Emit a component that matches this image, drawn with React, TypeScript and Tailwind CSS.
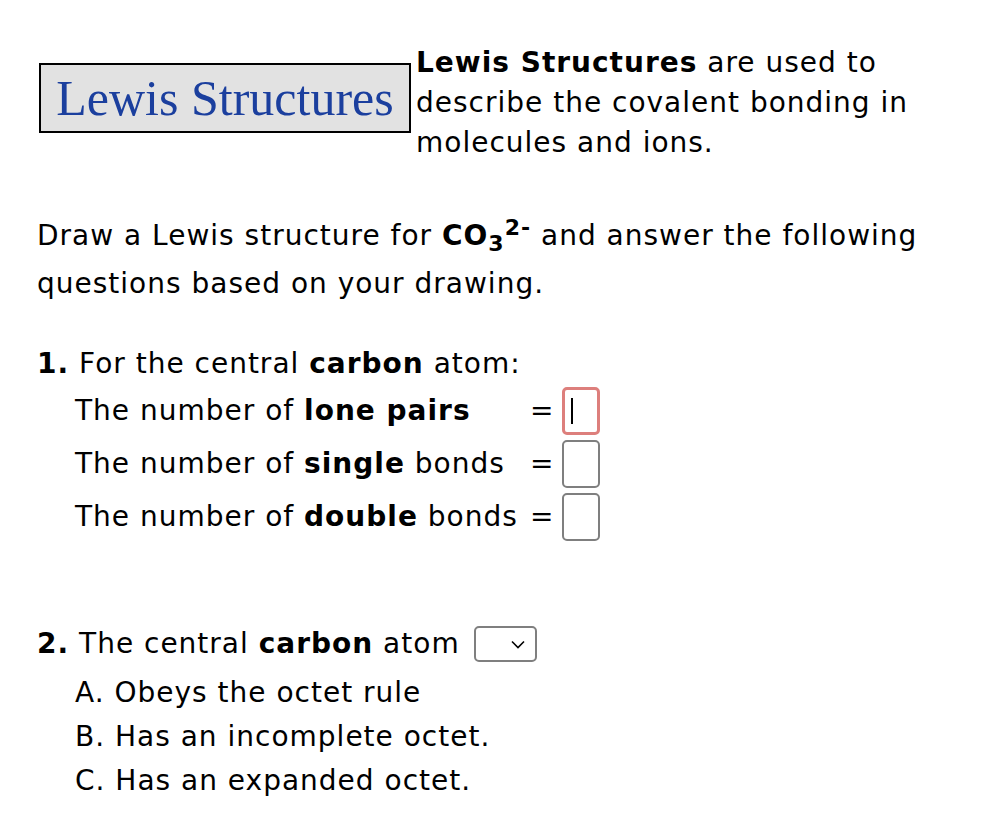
export default function App() {
  return (
    <div className="w-[984px] h-[816px] bg-white text-black font-['DejaVu_Sans',Verdana,sans-serif] text-[28px] tracking-[1px]">
      {/* header */}
      <div className="flex items-center pt-[43px] pl-[39px]">
        <div className="w-[372px] h-[70px] -mt-[10px] border-2 border-black bg-[#e2e2e2] flex items-center justify-center tracking-normal">
          <span className="font-['Liberation_Serif',serif] text-[50px] text-[#1b3f9e] leading-none">Lewis Structures</span>
        </div>
        <div className="pl-[5px] leading-[40px]">
          <div><b>Lewis Structures</b> are used to</div>
          <div>describe the covalent bonding in</div>
          <div>molecules and ions.</div>
        </div>
      </div>

      {/* prompt */}
      <div className="pl-[37px] pt-[49px] leading-[48px]">
        <div>
          Draw a Lewis structure for{' '}
          <b>
            CO<span className="text-[22px] leading-none relative top-[6px]">3</span>
            <span className="text-[22px] leading-none relative -top-[10px]">2-</span>
          </b>{' '}
          and answer the following
        </div>
        <div>questions based on your drawing.</div>
      </div>

      {/* question 1 */}
      <div className="pl-[37px] pt-[36px]">
        <div className="leading-[40px]">
          <b>1.</b> For the central <b>carbon</b> atom:
        </div>
        <div className="pl-[38px] pt-[3px] flex flex-col gap-[5px]">
          {[
            { pre: 'The number of ', bold: 'lone pairs', post: '', active: true },
            { pre: 'The number of ', bold: 'single', post: ' bonds', active: false },
            { pre: 'The number of ', bold: 'double', post: ' bonds', active: false },
          ].map((r, i) => (
            <div key={i} className="flex items-center h-[48px]">
              <div className="w-[455px] whitespace-nowrap">
                {r.pre}
                <b>{r.bold}</b>
                {r.post}
              </div>
              <div className="w-[16px] text-center tracking-normal">=</div>
              <div
                className={`ml-[16px] w-[38px] h-[48px] rounded-[5px] flex items-center pl-[6px] ${
                  r.active ? 'border-[3px] border-[#dd7f7c]' : 'border-2 border-[#7f7f7f]'
                }`}
              >
                {r.active && <div className="w-[2px] h-[26px] bg-black" />}
              </div>
            </div>
          ))}
        </div>
      </div>

      {/* question 2 */}
      <div className="pl-[37px] pt-[83px]">
        <div className="flex items-center h-[40px]">
          <span>
            <b>2.</b> The central <b>carbon</b> atom
          </span>
          <div className="ml-[14px] w-[63px] h-[36px] border-2 border-[#7f7f7f] rounded-[5px] flex items-center justify-end pr-[10px]">
            <svg width="14" height="9" viewBox="0 0 14 9" fill="none">
              <path d="M1 1.5 L7 7.5 L13 1.5" stroke="#000" strokeWidth="1.6" />
            </svg>
          </div>
        </div>
        <div className="pl-[38px] pt-[7px] leading-[44px]">
          <div>A. Obeys the octet rule</div>
          <div>B. Has an incomplete octet.</div>
          <div>C. Has an expanded octet.</div>
        </div>
      </div>
    </div>
  );
}
